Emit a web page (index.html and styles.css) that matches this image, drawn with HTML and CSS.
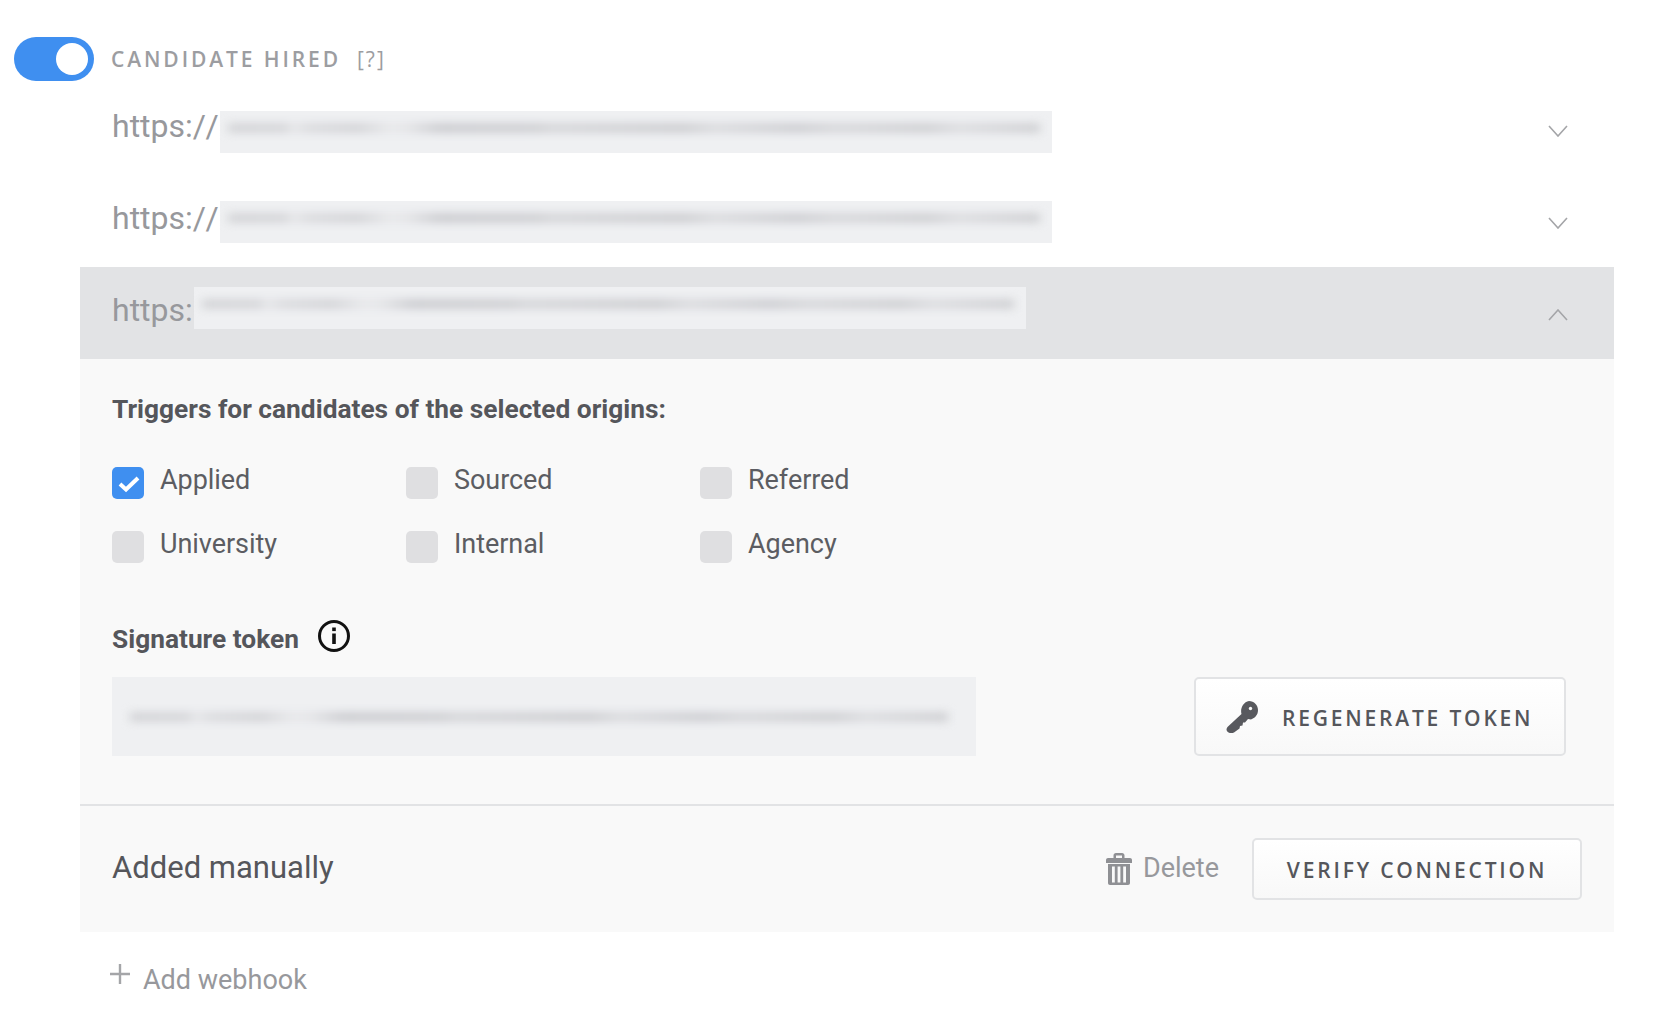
FILE: index.html
```html
<!DOCTYPE html>
<html lang="en">
<head>
<meta charset="utf-8">
<title>Webhooks</title>
<link rel="stylesheet" href="styles.css">
</head>
<body>
<main class="page">
  <header class="event">
    <span class="toggle"><span class="knob"></span></span>
    <span class="event-name">CANDIDATE HIRED</span>
    <span class="event-help">[?]</span>
  </header>
  <section class="hooks">
    <div class="hook hook-one">
      <span class="url">https:<span class="slashes">//</span></span>
      <span class="mask mask-one"><span class="smear"></span></span>
      <svg class="chev" viewBox="0 0 20 12"><path d="M1 1 10 11 19 1"/></svg>
    </div>
    <div class="hook hook-two">
      <span class="url">https:<span class="slashes">//</span></span>
      <span class="mask mask-two"><span class="smear"></span></span>
      <svg class="chev" viewBox="0 0 20 12"><path d="M1 1 10 11 19 1"/></svg>
    </div>
    <div class="hook hook-open">
      <span class="url">https:</span>
      <span class="mask mask-open"><span class="smear"></span></span>
      <svg class="chev" viewBox="0 0 20 12"><path d="M1 11 10 1 19 11"/></svg>
    </div>
    <div class="panel">
      <div class="settings">
        <h3 class="heading">Triggers for candidates of the selected origins:</h3>
        <div class="origins">
          <label class="origin"><span class="box box-on"><svg viewBox="0 0 32 32"><path d="M8 17 14 22.5 26 11"/></svg></span>Applied</label>
          <label class="origin"><span class="box"></span>Sourced</label>
          <label class="origin"><span class="box"></span>Referred</label>
          <label class="origin"><span class="box"></span>University</label>
          <label class="origin"><span class="box"></span>Internal</label>
          <label class="origin"><span class="box"></span>Agency</label>
        </div>
        <div class="token-title">
          <h3 class="heading">Signature token</h3>
          <svg class="info" viewBox="0 0 32 32"><circle cx="16" cy="16" r="14.5"/><rect class="info-mark" x="14.2" y="13.5" width="3.6" height="10.5"/><rect class="info-mark" x="14.2" y="7.5" width="3.6" height="3.6"/></svg>
        </div>
        <div class="token-row">
          <div class="token-field"><span class="smear"></span></div>
          <button class="btn btn-token">
            <svg class="key" viewBox="0 0 32 32"><path d="M23 0C28 0 32 4 32 9c0 5-3 8-7 9.500l-3-.5-3 3.500-2 0-.5 3-2.500 .5-.5 2.500-5.500 4C5 33 1.500 32 .5 29c0-1.500 .5-2.500 1.500-3.500L15.500 13C14 8 17 1 23 0Z"/><circle class="key-hole" cx="24.500" cy="7.500" r="1.700"/></svg>
            <span class="btn-label">REGENERATE TOKEN</span>
          </button>
        </div>
      </div>
      <footer class="hook-foot">
        <span class="source">Added manually</span>
        <span class="delete">
          <svg class="trash" viewBox="0 0 26 32"><path d="M7.500 5V2.500C7.500 1 8.500 0 10 0h6c1.500 0 2.500 1 2.500 2.500V5H24c1 0 2 .8 2 2v3H0V7c0-1.200 1-2 2-2h5.500Zm2.500 0h6V2.500h-6V5ZM2 11h22v19c0 1.200-.8 2-2 2H4c-1.200 0-2-.8-2-2V11Zm4 2.500v16h2.800v-16H6Zm5.600 0v16h2.800v-16h-2.800Zm5.600 0v16H20v-16h-2.800Z" fill-rule="evenodd"/></svg>
          Delete
        </span>
        <button class="btn btn-verify">VERIFY CONNECTION</button>
      </footer>
    </div>
  </section>
  <div class="add">
    <svg class="plus" viewBox="0 0 20 20"><path d="M10 0V20M0 10H20"/></svg>
    <span>Add webhook</span>
  </div>
</main>
</body>
</html>
```
FILE: styles.css
```css
* { box-sizing: border-box; }
html, body { margin: 0; background: #fff; }
body { font-family: Roboto, "Noto Sans", sans-serif; color: #55565b; width: 1668px; height: 1016px; overflow: hidden; }
.page { padding-top: 37px; }

.event { display: flex; align-items: center; height: 44px; padding-left: 14px; font-family: "Open Sans", sans-serif; font-weight: 600; font-size: 21px; letter-spacing: 2.9px; color: #9c9da1; }
.toggle { display: flex; align-items: center; justify-content: flex-end; width: 80px; height: 44px; padding-right: 6px; border-radius: 22px; background: #3f8ff0; margin-right: 17px; }
.knob { width: 32px; height: 32px; border-radius: 50%; background: #fff; }
.event-help { margin-left: 16px; font-weight: 400; letter-spacing: 2px; }

.hooks { width: 1534px; margin: 2px 0 0 80px; }
.hook { display: flex; align-items: flex-start; height: 92px; padding: 0 46px 0 32px; }
.hook-open { background: #e2e3e5; }
.url { margin-top: 21px; font-size: 32px; line-height: 44px; color: #97989c; white-space: nowrap; }
.slashes { letter-spacing: 3px; }
.mask { display: flex; align-items: center; height: 42px; background: #eff0f2; padding: 0 12px 8px 8px; position: absolute; width: 832px; }
.mask-one { left: 220px; top: 111px; }
.mask-two { left: 220px; top: 201px; }
.mask-open { left: 194px; top: 287px; }
.smear { display: block; width: 100%; height: 8px; filter: blur(5px); background: linear-gradient(90deg, #cdced1 0%, #d0d1d4 7%, #e4e5e7 8%, #d6d7da 10%, #cdced1 16%, #e6e7e9 20%, #e2e3e5 22%, #c4c5c9 26%, #c8c9cc 38%, #d0d1d4 40%, #c6c7ca 56%, #d6d7da 60%, #c6c7cb 70%, #d2d3d6 75%, #c8c9cc 86%, #d8d9dc 90%, #c8c9cc 100%); }
.chev { width: 20px; height: 12px; margin: 42px 0 0 auto; fill: none; stroke: #a4a5a8; stroke-width: 1.6; }

.panel { background: #f9f9f9; }
.settings { height: 447px; padding: 30px 48px 0 32px; border-bottom: 2px solid #e2e3e5; }
.heading { margin: 0; font-size: 26.3px; line-height: 40px; font-weight: 700; color: #55565b; white-space: nowrap; }
.origins { display: grid; grid-template-columns: repeat(3, 294px); row-gap: 32px; margin-top: 38px; }
.origin { display: flex; height: 32px; font-size: 27px; line-height: 26px; letter-spacing: -.05px; color: #5c5d62; gap: 16px; }
.box { flex: none; width: 32px; height: 32px; border-radius: 5px; background: #dfdfe1; }
.box-on { background: #3f8ff0; }
.box-on svg { display: block; fill: none; stroke: #fff; stroke-width: 4; }
.token-title { display: flex; align-items: center; gap: 19px; margin-top: 60px; height: 32px; }
.info { width: 32px; height: 32px; margin-top: -6px; }
.info circle { fill: none; stroke: #111; stroke-width: 3; }
.info-mark { fill: #111; }
.token-row { display: flex; justify-content: space-between; margin-top: 22px; }
.token-field { display: flex; align-items: center; width: 864px; height: 79px; background: #eff0f2; padding: 0 28px 0 18px; }
.btn { display: flex; align-items: center; justify-content: center; border: 2px solid #e2e3e5; border-radius: 5px; background: linear-gradient(#fff, #f8f8f8); font-family: "Open Sans", sans-serif; font-weight: 600; font-size: 21px; letter-spacing: 2.8px; color: #55565b; }
.btn-token { width: 372px; height: 79px; gap: 24px; padding: 0 0 0 30px; justify-content: flex-start; }
.btn-label { padding-top: 2px; }
.key { width: 32px; height: 32px; fill: #58595e; }
.key-hole { fill: #f9f9f9; }
.btn-verify { width: 330px; height: 62px; padding: 2px 0 0; margin-left: 33px; }

.hook-foot { display: flex; align-items: center; height: 126px; padding: 0 32px; }
.source { font-size: 31px; color: #55565b; margin: -4px auto 0 0; }
.delete { display: flex; align-items: center; gap: 11px; padding-bottom: 2px; font-size: 27px; color: #97989c; }
.trash { width: 26px; height: 32px; fill: #8f9094; margin-top: 2px; }

.add { display: flex; align-items: center; gap: 13px; height: 44px; margin: 26px 0 0 110px; font-size: 27px; color: #97989c; }
.plus { width: 20px; height: 20px; margin-top: -12px; fill: none; stroke: #a4a5a8; stroke-width: 2.4; }
```
